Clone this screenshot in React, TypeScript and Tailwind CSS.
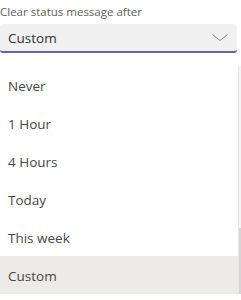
const options = ["Never", "1 Hour", "4 Hours", "Today", "This week", "Custom"];

const App = () => {
    const selected = "Custom";

    return (
        <div className="w-[241px] h-[300px] bg-white overflow-hidden" style={{ fontFamily: '"Open Sans", "Noto Sans", sans-serif' }}>
            <div className="pt-[4px] text-[11.5px] leading-[16px] text-[#616161]">Clear status message after</div>

            <div className="mt-[4px] w-[237px] h-[29px] flex items-center justify-between pl-[8px] pr-[9px] bg-[#f0f0f0] rounded-[3px] border-b-2 border-[#6264a7]">
                <span className="pt-[1px] text-[13.5px] text-[#323130]">{selected}</span>
                <svg width="16" height="8" viewBox="0 0 16 8" fill="none">
                    <polyline points="0.5,0.5 8,6.5 15.5,0.5" stroke="#7a7876" strokeWidth="0.9" />
                </svg>
            </div>

            <div className="mt-[13px] flex">
                <div className="w-[238px]">
                    {options.map((item, i) => (
                        <div
                            key={i}
                            className={`h-[38px] flex items-center pl-[8px] pt-[2px] text-[13.5px] text-[#484644] ${item === selected ? "bg-[#edebe9]" : "bg-white"}`}
                        >
                            {item}
                        </div>
                    ))}
                </div>
                <div className="w-[3px] flex flex-col bg-[#f5f5f5] border-l border-[#e8e8e8]">
                    <div className="h-[162px]"></div>
                    <div className="flex-1 bg-[#d6d6d6]"></div>
                </div>
            </div>
        </div>
    )
}

export default App;
